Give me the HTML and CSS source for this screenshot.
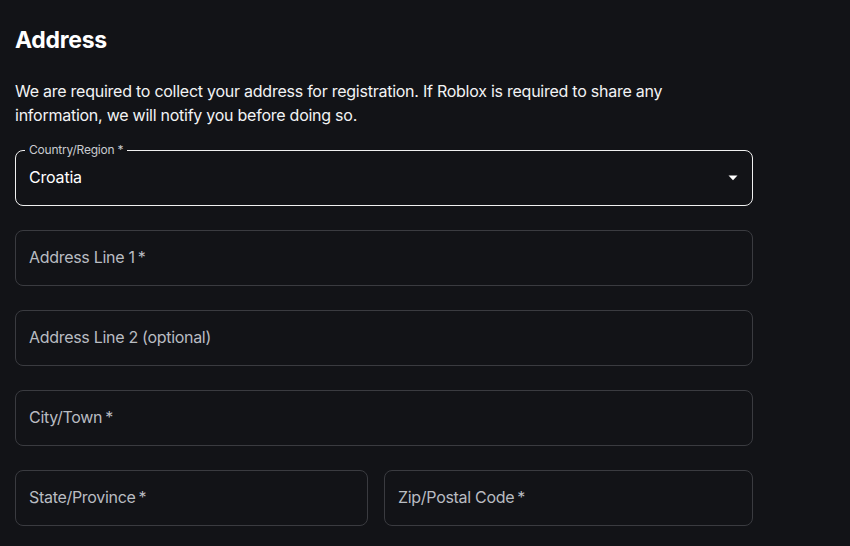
FILE: index.html
```html
<!DOCTYPE html>
<html lang="en">
<head>
<meta charset="utf-8">
<title>Address</title>
<link rel="stylesheet" href="styles.css">
</head>
<body>
<main class="page">
  <h1 class="title">Address</h1>
  <p class="intro">We are required to collect your address for registration. If Roblox is required to share any information, we will notify you before doing so.</p>
  <div class="form">
    <div class="field field-select">
      <span class="float-label">Country/Region<span class="req">*</span></span>
      <span class="value">Croatia</span>
      <svg class="caret" width="10" height="6" viewBox="0 0 10 6"><path d="M0.5 0.5 H9.5 L5 5.2 Z" fill="#ffffff"/></svg>
    </div>
    <div class="field"><span class="placeholder">Address Line 1<span class="req">*</span></span></div>
    <div class="field"><span class="placeholder">Address Line 2 (optional)</span></div>
    <div class="field"><span class="placeholder">City/Town<span class="req">*</span></span></div>
    <div class="row">
      <div class="field"><span class="placeholder">State/Province<span class="req">*</span></span></div>
      <div class="field"><span class="placeholder">Zip/Postal Code<span class="req">*</span></span></div>
    </div>
  </div>
</main>
</body>
</html>
```
FILE: styles.css
```css
html, body {
  margin: 0;
  padding: 0;
  background: #121317;
}
body {
  font-family: Inter, "Noto Sans", "Liberation Sans", sans-serif;
  color: #ffffff;
  overflow: hidden;
}
.page {
  width: 738px;
  padding: 24px 15px 0 15px;
}
.title {
  margin: 0;
  font-size: 23px;
  line-height: 32px;
  font-weight: 700;
  letter-spacing: -0.3px;
}
.intro {
  margin: 23px 0 0 0;
  max-width: 700px;
  font-size: 16px;
  line-height: 24px;
  color: #f2f3f5;
  letter-spacing: -0.25px;
}
.form {
  margin-top: 23px;
  display: flex;
  flex-direction: column;
  gap: 24px;
}
.field {
  box-sizing: border-box;
  height: 56px;
  border: 1px solid #3a3b40;
  border-radius: 8px;
  display: flex;
  align-items: center;
  padding: 0 14px 0 13px;
  position: relative;
}
.field-select {
  border-color: #f0f0f0;
  justify-content: space-between;
}
.float-label {
  position: absolute;
  top: -8px;
  left: 9px;
  padding: 0 4px;
  background: #121317;
  font-size: 12px;
  line-height: 14px;
  color: #c9cbd0;
  letter-spacing: -0.2px;
}
.req {
  margin-left: 3px;
}
.value {
  font-size: 16px;
  color: #ffffff;
  margin-top: -2px;
  letter-spacing: -0.2px;
}
.caret {
  display: block;
}
.placeholder {
  font-size: 16px;
  color: #b9bcc2;
  letter-spacing: -0.3px;
  margin-top: -2px;
}
.row {
  display: grid;
  grid-template-columns: 353px 1fr;
  gap: 16px;
}
```
